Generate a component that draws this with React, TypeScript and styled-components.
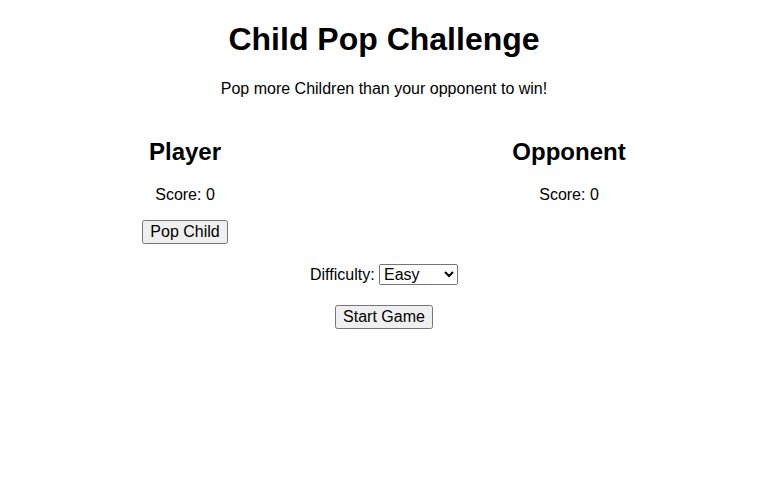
import { useState } from 'react';
import styled, { createGlobalStyle } from 'styled-components';

const GlobalStyle = createGlobalStyle`
  body {
    margin: 0;
    background: #fff;
    color: #000;
    font-family: 'Liberation Sans', Arial, sans-serif;
  }
`;

const Page = styled.div`
  text-align: center;
`;

const Title = styled.h1`
  font-size: 32px;
  margin: 21.44px 0;
`;

const Tagline = styled.p`
  font-size: 16px;
  margin: 16px 0;
`;

const Board = styled.div`
  display: flex;
  justify-content: space-around;
  margin: 20px 0;
`;

const Side = styled.div`
  text-align: center;
`;

const SideName = styled.h2`
  font-size: 24px;
  margin: 19.92px 0;
`;

const Score = styled.p`
  font-size: 16px;
  margin: 16px 0;
`;

const Button = styled.button`
  font-family: inherit;
  font-size: 16px;
`;

const Settings = styled.div`
  margin: 20px 0;
  font-size: 16px;
`;

const Select = styled.select`
  font-family: inherit;
  font-size: 16px;
`;

export default function App() {
  const [player, setPlayer] = useState(0);
  const [opponent] = useState(0);
  const [difficulty, setDifficulty] = useState('easy');

  return (
    <Page>
      <GlobalStyle />
      <Title>Child Pop Challenge</Title>
      <Tagline>Pop more Children than your opponent to win!</Tagline>

      <Board>
        <Side>
          <SideName>Player</SideName>
          <Score>Score: {player}</Score>
          <Button onClick={() => setPlayer(player + 1)}>Pop Child</Button>
        </Side>
        <Side>
          <SideName>Opponent</SideName>
          <Score>Score: {opponent}</Score>
        </Side>
      </Board>

      <Settings>
        <label htmlFor='difficulty'>Difficulty: </label>
        <Select
          id='difficulty'
          value={difficulty}
          onChange={(e) => setDifficulty(e.target.value)}
        >
          <option value='easy'>Easy</option>
          <option value='medium'>Medium</option>
          <option value='hard'>Hard</option>
        </Select>
      </Settings>

      <Button>Start Game</Button>
    </Page>
  );
}
